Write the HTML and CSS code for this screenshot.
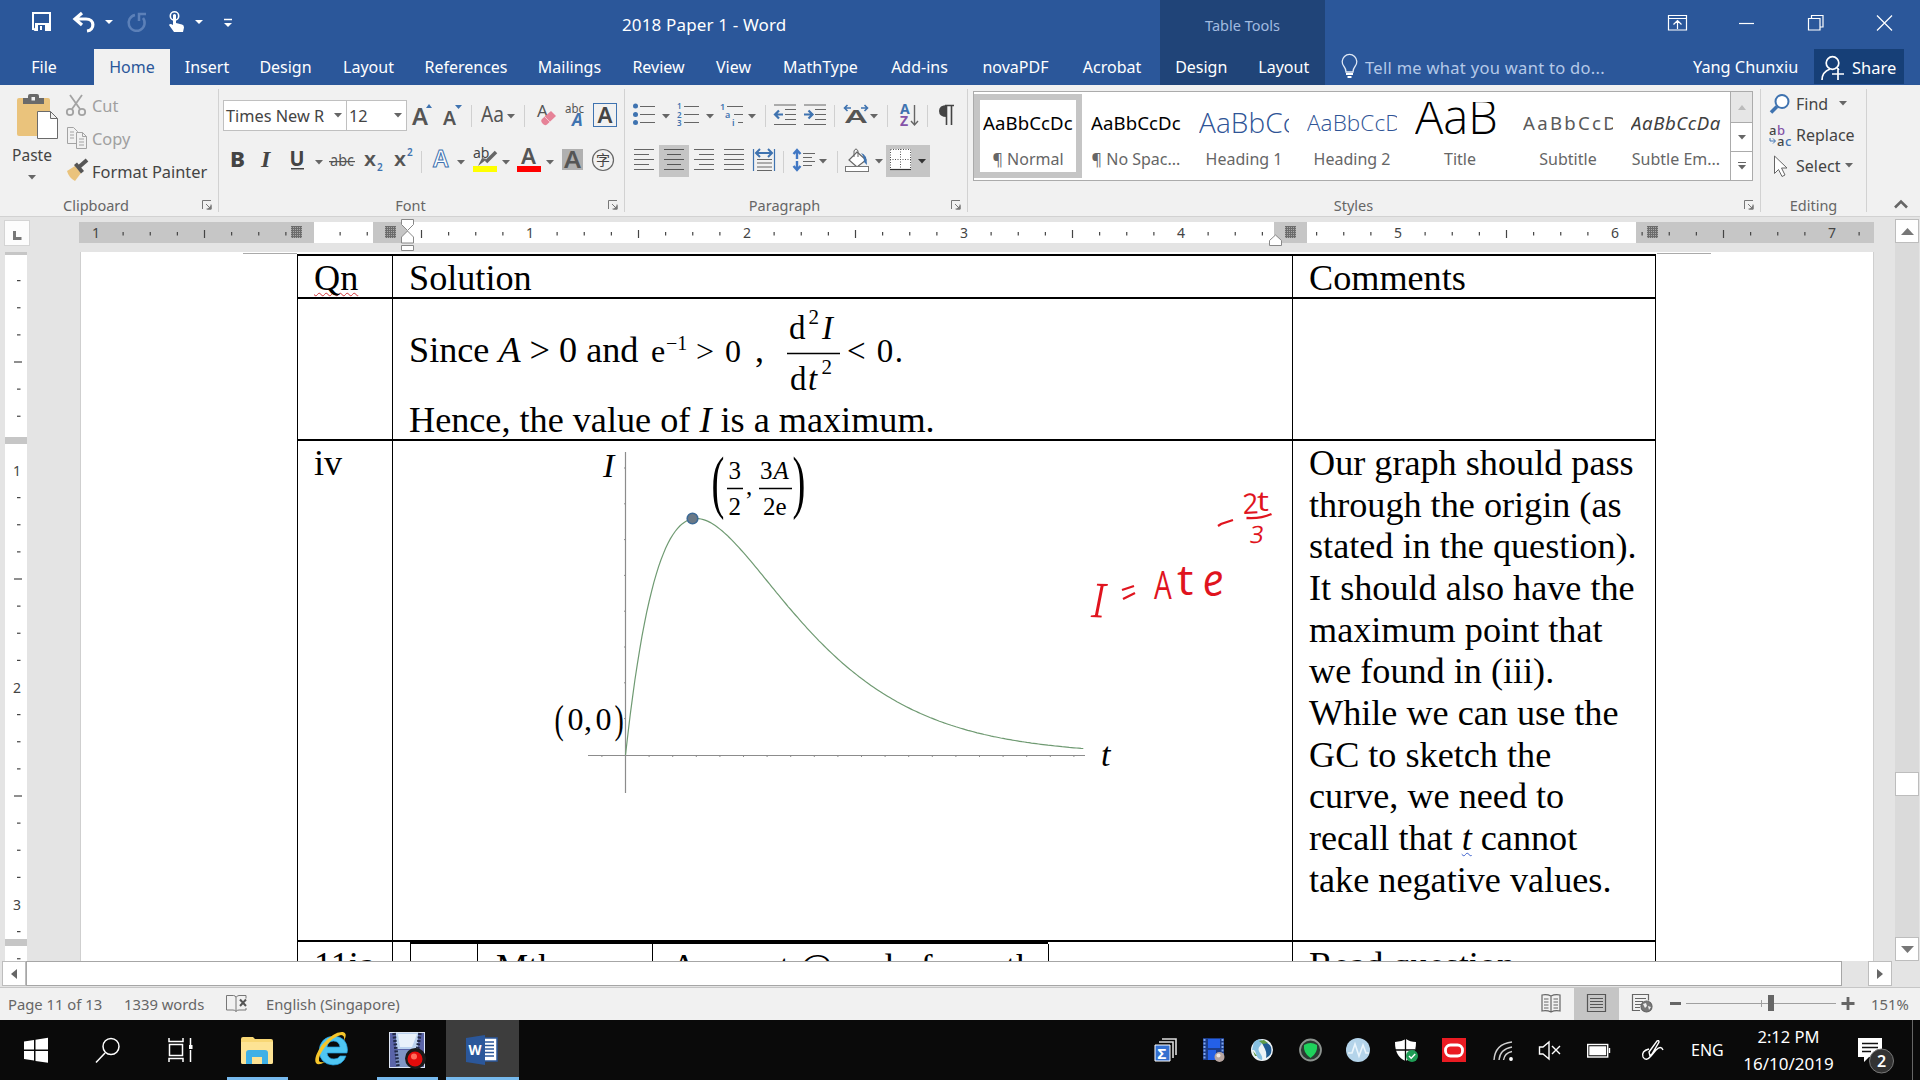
FILE: index.html
```html
<!DOCTYPE html>
<html lang="en">
<head>
  <meta charset="UTF-8">
  <meta name="viewport" content="width=device-width, initial-scale=1.0">
  <title>2018 Paper 1 - Word</title>
  <link rel="stylesheet" href="styles.css">
</head>
<body>
  <!-- Shared symbols -->
  <svg class="defs" width="0" height="0">
    <defs>
      <pattern id="grip" width="2" height="2" patternUnits="userSpaceOnUse"><rect width="2" height="2" fill="#a8a8a8"/><path d="M0 0h1v2h-1zM0 0h2v1h-2z" fill="#6c6c6c"/></pattern>
      <symbol id="launcher" viewBox="0 0 10 10"><path d="M.5 9V.5H9M4 4l4 4M9 4.500V9H4.500" fill="none" stroke="#777"/><path d="M9.500 5v4.500H5z" fill="#777"/></symbol>
      <symbol id="down" viewBox="0 0 8 5"><path d="M0 0h8L4 4.600z" fill="#666"/></symbol>
    </defs>
  </svg>

  <!-- Title bar and tabs -->
  <header class="top">
    <div class="top-main">
      <div class="titlebar">
        <svg class="quick" width="240" height="48" viewBox="0 0 240 48">
          <path d="M33 13h17v17H35l-2-2zM33 13v17" fill="none" stroke="#fff" stroke-width="2"/><path d="M35 23h14v7H35z" fill="#fff"/><path d="M38 25h7v6h-7z" fill="#2b579a"/><path d="M40 26h2v4h-2z" fill="#fff"/>
          <path d="M76 19h10c9 0 9 11 1 12M82 13l-7 6 7 6" fill="none" stroke="#fff" stroke-width="3.200"/>
          <path d="M105 20h8l-4 4zM195 20h8l-4 4zM224 23h8l-4 4z" fill="#fff"/>
          <path d="M135 15a8 8 0 1 0 8 3M146 14h-7v7" fill="none" stroke="#5c80b8" stroke-width="2.500"/>
          <circle cx="174.500" cy="16" r="4.200" fill="none" stroke="#fff" stroke-width="1.600"/><path d="M173 15q1.500-2 3 0v8l6 1.500q2 .5 2 3l-1 4.500h-9l-5-7q1-2 4 0z" fill="#fff"/>
          <path d="M224 19.500h8" stroke="#fff" stroke-width="1.500"/>
        </svg>
        <span class="doc-title">2018 Paper 1 - Word</span>
      </div>
      <nav class="tabs">
        <a class="tab w-file">File</a>
        <a class="tab active w-home">Home</a>
        <a class="tab w-insert">Insert</a>
        <a class="tab w-design">Design</a>
        <a class="tab w-design">Layout</a>
        <a class="tab w-refs">References</a>
        <a class="tab w-mail">Mailings</a>
        <a class="tab w-design">Review</a>
        <a class="tab w-view">View</a>
        <a class="tab w-math">MathType</a>
        <a class="tab w-addins">Add-ins</a>
        <a class="tab w-nova">novaPDF</a>
        <a class="tab w-acro">Acrobat</a>
      </nav>
    </div>
    <div class="top-table">
      <div class="table-tools">Table Tools</div>
      <nav class="tabs">
        <a class="tab w-design">Design</a>
        <a class="tab w-design">Layout</a>
      </nav>
    </div>
    <div class="top-right">
      <svg class="win-buttons" width="595" height="49" viewBox="1325 0 595 49" fill="none" stroke="#fff" stroke-width="1.200">
        <path d="M1668.500 15.500h18v14.500h-18zM1668.500 18.500h18M1677.500 29v-8M1673.500 24.500l4-4 4 4"/>
        <path d="M1739 23.500h15"/>
        <path d="M1808.500 18.500h11.500v11.500h-11.500zM1811.500 18v-2.500h11.500v11.500h-3"/>
        <path d="M1877 15.500l15 15M1892 15.500l-15 15"/>
      </svg>
      <div class="tellrow">
        <svg width="36" height="36" viewBox="1325 49 36 36"><path d="M1346 72q0-3-2-5.500a7.300 7.300 0 1 1 11 0q-2 2.500-2 5.500z" fill="none" stroke="#dfe8f5" stroke-width="1.300"/><path d="M1346 74h7M1347.500 77h4" stroke="#fff" stroke-width="1.800"/></svg>
        <span class="tell">Tell me what you want to do...</span>
        <span class="user">Yang Chunxiu</span>
        <a class="share">
          <svg width="34" height="35" viewBox="1814 49 34 35"><g fill="none" stroke="#fff" stroke-width="1.700"><circle cx="1832.500" cy="63" r="6.300"/><path d="M1822 80q0-8 8-11M1838 68v12M1832 74h12M1837 68l2 2"/></g></svg>
          <span>Share</span>
        </a>
      </div>
    </div>
  </header>

  <!-- Ribbon -->
  <section class="ribbon">
    <div class="group clipboard">
      <div class="body">
        <div class="paste">
          <svg width="62" height="56" viewBox="0 89 62 56"><rect x="16" y="98" width="33" height="38" rx="2" fill="#eac37c"/><path d="M22 104v-6h5v-2q0-2 2-2h7q2 0 2 2v2h5v6z" fill="#6a6a6a"/><rect x="30.500" y="97" width="3.500" height="3.500" fill="#f1f1f1"/><path d="M36.500 111.500h13l7 7v20h-20zM49.500 111.500v7h7" fill="#fff" stroke="#6a6a6a"/></svg>
          <span>Paste</span>
          <svg class="arrow" width="8" height="5"><use href="#down"/></svg>
        </div>
        <div class="clip-list">
          <div class="cmd dim"><svg width="27" height="24" viewBox="64 93 27 24" fill="none" stroke="#a3a3a3" stroke-width="1.800"><path d="M70 95l10 14M82 95l-10 14"/><circle cx="70" cy="112" r="3.200"/><circle cx="82" cy="112" r="3.200"/></svg><span>Cut</span></div>
          <div class="cmd dim"><svg width="27" height="26" viewBox="64 125 27 26" fill="#f1f1f1" stroke="#a3a3a3"><path d="M67.500 127.500h6l4 4v12h-10zM70 132h4M70 135h4M70 138h4"/><path d="M76.500 132.500h6l4 4v12h-10zM82.500 132.500v4h4M79 139h5M79 142h5M79 145h5"/></svg><span>Copy</span></div>
          <div class="cmd"><svg width="27" height="26" viewBox="64 158 27 26"><path d="M67 171l8-5 6 7-6 8q-6-3-8-10z" fill="#eac37c"/><path d="M74 165l3-2.500 7 8.500-3 2.500z" fill="#555"/><path d="M79 167l8-7" stroke="#555" stroke-width="4"/></svg><span>Format Painter</span></div>
        </div>
      </div>
      <div class="label"><i></i><span>Clipboard</span><i></i><svg width="10" height="10"><use href="#launcher"/></svg></div>
    </div>

    <div class="group font">
      <div class="body rows">
        <div class="row">
          <div class="combo name"><span>Times New R</span><svg width="8" height="5"><use href="#down"/></svg></div>
          <div class="combo size"><span>12</span><svg width="8" height="5"><use href="#down"/></svg></div>
          <svg width="64" height="32" viewBox="407 99 64 32" fill="#555"><text class="ic" x="412" y="125" font-size="23" textLength="16" lengthAdjust="spacingAndGlyphs" font-weight="600">A</text><path d="M426 108l3-4 3 4z" fill="#3f73b0"/><text class="ic" x="443" y="125" font-size="19" textLength="13" lengthAdjust="spacingAndGlyphs" font-weight="600">A</text><path d="M455 105h7l-3.500 4z" fill="#3f73b0"/></svg>
          <svg width="53" height="32" viewBox="471 99 53 32"><path d="M471.500 105v22" stroke="#d0d0d0"/><text class="ic" x="481" y="122" font-size="21" fill="#555" textLength="23" lengthAdjust="spacingAndGlyphs">Aa</text><path d="M507 114h8l-4 4.500z" fill="#666"/></svg>
          <svg width="38" height="32" viewBox="524 99 38 32"><path d="M524.500 105v22" stroke="#d0d0d0"/><text class="ic" x="537" y="117" font-size="17" fill="#555">A</text><path d="M542 119l9-8 5 5-9 8.500q-2 1.500-4-.5-3-3-1-5z" fill="#e68297"/><path d="M545 117l5 5" stroke="#f5c5cf"/></svg>
          <svg width="60" height="32" viewBox="562 99 60 32"><text class="ic" x="565" y="113" font-size="13" fill="#555" textLength="19" lengthAdjust="spacingAndGlyphs">abc</text><text class="ic" x="572" y="126" font-size="17" fill="#3f73b0" font-weight="700" font-style="italic">A</text><rect x="593.500" y="103.500" width="23" height="23" fill="none" stroke="#3f73b0"/><text class="ic" x="597.500" y="122.500" font-size="22" font-weight="600" fill="#444" textLength="15" lengthAdjust="spacingAndGlyphs">A</text></svg>
        </div>
        <div class="row">
          <svg width="105" height="32" viewBox="223 145 105 32" fill="#444"><text class="ic" x="230" y="167" font-size="22" font-weight="800" textLength="15" lengthAdjust="spacingAndGlyphs">B</text><text class="se" x="261" y="167" font-size="24" font-weight="700" font-style="italic">I</text><text class="ic" x="289.500" y="166" font-size="21" font-weight="700" textLength="15" lengthAdjust="spacingAndGlyphs">U</text><path d="M291 168h13v1.500h-13z"/><path d="M315 160h8l-4 4.500z" fill="#666"/></svg>
          <svg width="93" height="32" viewBox="328 145 93 32" fill="#555"><text class="ic" x="330" y="166" font-size="17" textLength="24" lengthAdjust="spacingAndGlyphs">abc</text><path d="M329 161h26v1.200h-26z"/><text class="ic" x="364" y="166" font-size="20" font-weight="600" textLength="12" lengthAdjust="spacingAndGlyphs">x</text><text class="ic" x="377" y="171" font-size="10" font-weight="600" fill="#3f73b0">2</text><text class="ic" x="394" y="166" font-size="20" font-weight="600" textLength="12" lengthAdjust="spacingAndGlyphs">x</text><text class="ic" x="407" y="156" font-size="10" font-weight="600" fill="#3f73b0">2</text></svg>
          <svg width="49" height="32" viewBox="421 145 49 32"><path d="M421.500 151v22" stroke="#d0d0d0"/><text class="ic" x="433" y="167" font-size="23" font-weight="600" fill="#fff" stroke="#3f73b0" stroke-width="1">A</text><path d="M457 160h8l-4 4.500z" fill="#666"/></svg>
          <svg width="44" height="32" viewBox="470 145 44 32"><text class="ic" x="473" y="158" font-size="14" fill="#444">ab</text><path d="M496 152l-10 10" stroke="#666" stroke-width="3.500"/><path d="M487 159l-9 7 4-8z" fill="#666"/><rect x="473" y="166" width="24" height="6" fill="#ff0"/><path d="M502 160h8l-4 4.500z" fill="#666"/></svg>
          <svg width="44" height="32" viewBox="514 145 44 32"><text class="ic" x="521" y="164" font-size="21" font-weight="600" fill="#555" textLength="15" lengthAdjust="spacingAndGlyphs">A</text><rect x="517" y="166" width="24" height="6" fill="#f00"/><path d="M546 160h8l-4 4.500z" fill="#666"/></svg>
          <svg width="64" height="32" viewBox="558 145 64 32"><rect x="562" y="149" width="21" height="21" fill="#b0b0b0"/><text class="ic" x="564" y="168" font-size="23" font-weight="600" fill="#555" textLength="17" lengthAdjust="spacingAndGlyphs">A</text><circle cx="603" cy="160" r="10.500" fill="none" stroke="#666" stroke-width="1.200"/><text class="cjk" x="596" y="165" font-size="14" fill="#444">字</text></svg>
        </div>
      </div>
      <div class="label"><i></i><span>Font</span><i></i><svg width="10" height="10"><use href="#launcher"/></svg></div>
    </div>

    <div class="group paragraph">
      <div class="body rows">
        <div class="row">
          <svg width="47" height="32" viewBox="628 99 47 32"><g fill="#3f73b0"><circle cx="635.500" cy="106" r="2.500"/><circle cx="635.500" cy="114.500" r="2.500"/><circle cx="635.500" cy="122.500" r="2.500"/></g><path d="M640 106.500h15M640 114.500h15M640 122.500h15" stroke="#666" stroke-width="1.200"/><path d="M662 114h8l-4 4.500z" fill="#666"/></svg>
          <svg width="44" height="32" viewBox="675 99 44 32"><g class="ic" fill="#3f73b0" font-size="8" font-weight="600"><text x="677" y="109">1</text><text x="677" y="117.500">2</text><text x="677" y="126">3</text></g><path d="M684 106.500h15M684 114.500h15M684 122.500h15" stroke="#666" stroke-width="1.200"/><path d="M706 114h8l-4 4.500z" fill="#666"/></svg>
          <svg width="46" height="32" viewBox="719 99 46 32"><g class="ic" fill="#3f73b0" font-size="9" font-weight="600"><text x="720" y="110">1</text><text x="725" y="118">a</text><text x="732" y="126">i</text></g><path d="M727 106.500h16M734 114.500h9M738 122.500h5" stroke="#666" stroke-width="1.200"/><path d="M748 114h8l-4 4.500z" fill="#666"/></svg>
          <svg width="69" height="32" viewBox="765 99 69 32"><path d="M765.500 105v22" stroke="#d0d0d0"/><path d="M774 105h22M785 109.500h11M785 114.500h11M785 119.500h11M774 124.500h22M804 105h22M815 109.500h11M815 114.500h11M815 119.500h11M804 124.500h22" stroke="#666" stroke-width="1.200"/><path d="M783 114.500h-8M779 110.500l-4 4 4 4M804 114.500h8M808.500 110.500l4 4-4 4" fill="none" stroke="#3f73b0" stroke-width="2.200"/></svg>
          <svg width="53" height="32" viewBox="834 99 53 32"><path d="M834.500 105v22" stroke="#d0d0d0"/><text class="ic" x="845" y="123" font-size="18" font-weight="600" fill="#555" textLength="22" lengthAdjust="spacingAndGlyphs">A</text><path d="M845 108h6M847.500 105l-3 3 3 3M867 108h-6M864.500 105l3 3-3 3" fill="none" stroke="#3f73b0" stroke-width="1.600"/><path d="M870 114h8l-4 4.500z" fill="#666"/></svg>
          <svg width="40" height="32" viewBox="887 99 40 32"><path d="M887.500 105v22" stroke="#d0d0d0"/><g class="ic" font-size="14" font-weight="700"><text x="900" y="114" fill="#3f73b0">A</text><text x="900" y="126" fill="#8453a8">Z</text></g><path d="M914.500 105v20M911 121l3.500 4 3.500-4" fill="none" stroke="#666" stroke-width="1.400"/></svg>
          <svg width="38" height="32" viewBox="927 99 38 32"><path d="M927.500 105v22" stroke="#d0d0d0"/><path d="M947 105v12q-8 0-8-6t8-6z" fill="#444"/><path d="M945 105.500h9M946.500 105v20M951.500 105v20" stroke="#444" stroke-width="1.600"/></svg>
        </div>
        <div class="row">
          <svg width="31" height="32" viewBox="628 145 31 32"><path d="M634 149.500h20M634 154.500h15M634 159.500h20M634 164.500h15M634 169.500h20" stroke="#666" stroke-width="1.200"/></svg>
          <svg class="on" width="30" height="32" viewBox="659 145 30 32"><path d="M664 149.500h20M667 154.500h14M664 159.500h20M667 164.500h14M664 169.500h20" stroke="#555" stroke-width="1.200"/></svg>
          <svg width="61" height="32" viewBox="689 145 61 32"><path d="M694 149.500h20M699 154.500h15M694 159.500h20M699 164.500h15M694 169.500h20M724 149.500h20M724 154.500h20M724 159.500h20M724 164.500h20M724 169.500h20" stroke="#666" stroke-width="1.200"/></svg>
          <svg width="33" height="32" viewBox="750 145 33 32"><path d="M757 159.500h15M757 163h15M757 167h15M757 170.500h15" stroke="#666" stroke-width="1.200"/><path d="M753.500 149v22M774.500 149v22" stroke="#3f73b0" stroke-width="1.200"/><path d="M756.500 153h15M760 149l-4 4 4 4M768 149l4 4-4 4" fill="none" stroke="#3f73b0" stroke-width="2"/></svg>
          <svg width="54" height="32" viewBox="783 145 54 32"><path d="M783.500 151v22" stroke="#d0d0d0"/><path d="M797 150v20M793.500 154l3.500-4 3.500 4M793.500 166l3.500 4 3.500-4" fill="none" stroke="#4178c4" stroke-width="2.400"/><path d="M795 160h4" stroke="#f1f1f1" stroke-width="2"/><path d="M803 153.500h12M803 157.500h9M803 161.500h12M803 165.500h9" stroke="#666" stroke-width="1.200"/><path d="M819 159h8l-4 4.500z" fill="#666"/></svg>
          <svg width="49" height="32" viewBox="837 145 49 32"><path d="M837.500 151v22" stroke="#d0d0d0"/><path d="M857 152l9 8-9 7-8-7z" fill="#fff" stroke="#666" stroke-width="1.200"/><path d="M854 157v-6q2-4 4 0v6" fill="none" stroke="#666"/><path d="M861 153q6 1 6 12l-3-3q0-6-3-9z" fill="#3f73b0"/><rect x="845.500" y="166.500" width="23" height="5" fill="#fff" stroke="#777"/><path d="M875 159h8l-4 4.500z" fill="#666"/></svg>
          <svg class="on" width="44" height="32" viewBox="886 145 44 32"><rect x="890" y="149" width="21" height="21" fill="#fff"/><path d="M890.500 149.500h20v20M890.500 149.500v20M900.500 149v21M890 159.500h21" fill="none" stroke="#555" stroke-dasharray="1 1.500"/><path d="M890 169.500h21" stroke="#333" stroke-width="1.200"/><path d="M918 159h8l-4 4.500z" fill="#333"/></svg>
        </div>
      </div>
      <div class="label"><i></i><span>Paragraph</span><i></i><svg width="10" height="10"><use href="#launcher"/></svg></div>
    </div>

    <div class="group styles">
      <div class="body">
        <div class="gallery">
          <div class="style selected"><div class="preview">AaBbCcDc</div><div class="name">¶ Normal</div></div>
          <div class="style"><div class="preview">AaBbCcDc</div><div class="name">¶ No Spac...</div></div>
          <div class="style"><div class="preview h1">AaBbCc</div><div class="name">Heading 1</div></div>
          <div class="style"><div class="preview h2">AaBbCcD</div><div class="name">Heading 2</div></div>
          <div class="style"><div class="preview title">AaB</div><div class="name">Title</div></div>
          <div class="style"><div class="preview sub">AaBbCcD</div><div class="name">Subtitle</div></div>
          <div class="style"><div class="preview em">AaBbCcDa</div><div class="name">Subtle Em...</div></div>
          <div class="gallery-scroll">
            <span class="off"><svg width="8" height="5" viewBox="0 0 8 5"><path d="M0 5h8L4 0z" fill="#bbb"/></svg></span>
            <span><svg width="8" height="5"><use href="#down"/></svg></span>
            <span><svg width="8" height="8" viewBox="0 0 8 8"><path d="M0 .5h8" stroke="#666"/><path d="M0 3h8L4 7.600z" fill="#666"/></svg></span>
          </div>
        </div>
      </div>
      <div class="label"><i></i><span>Styles</span><i></i><svg width="10" height="10"><use href="#launcher"/></svg></div>
    </div>

    <div class="group editing">
      <div class="body">
        <div class="cmd"><svg width="30" height="24" viewBox="1766 91 30 24" fill="none" stroke="#3f73b0"><circle cx="1782" cy="100.500" r="6.500" stroke-width="2" fill="#fff"/><path d="M1777 105.500l-6 6" stroke-width="3.500"/></svg><span>Find</span><svg class="gap-l" width="8" height="5"><use href="#down"/></svg></div>
        <div class="cmd"><svg width="30" height="26" viewBox="1766 121 30 26"><g class="ic" font-size="13" font-weight="500"><text x="1769" y="134" fill="#444">a</text><text x="1777" y="134" fill="#8453a8">b</text><text x="1777" y="145" fill="#444">a</text><text x="1785" y="145" fill="#3f73b0">c</text></g><path d="M1770 137v3h5M1773 137.500l2.500 2.500-2.500 2.500" fill="none" stroke="#3f73b0"/></svg><span>Replace</span></div>
        <div class="cmd"><svg width="30" height="26" viewBox="1766 152 30 26"><path d="M1774.500 155l12.500 12h-5.500l3.500 7-3 1.500-3.500-7-4 4z" fill="#fff" stroke="#666"/></svg><span>Select</span><svg class="gap-s" width="8" height="5"><use href="#down"/></svg></div>
      </div>
      <div class="label single"><span>Editing</span></div>
    </div>
    <svg class="collapse" width="16" height="10" viewBox="0 0 16 10"><path d="M2 8.500l6-6 6 6" fill="none" stroke="#666" stroke-width="2.600"/></svg>
  </section>

  <!-- Rulers and document -->
  <main class="workspace">
    <div class="view">
      <svg class="hruler" width="1895" height="34" viewBox="0 217 1895 34">
        <rect x="4.500" y="220.500" width="25" height="25" fill="#fcfcfc" stroke="#d4d4d4"/>
        <path d="M14.500 231v7.500H21.500" fill="none" stroke="#777" stroke-width="3"/>
        <rect x="79" y="222" width="1795" height="21" fill="#c6c6c6"/>
        <path d="M314 222h59v21h-59zM407 222h867v21h-867zM1307 222h329v21h-329z" fill="#fff"/>
        <g id="hticks"></g>
        <path d="M291 226h11v12h-11zM385 226h11v12h-11zM1285 226h11v12h-11zM1647 226h11v12h-11z" fill="url(#grip)"/>
        <path d="M401.500 219.500h12v5l-6 6-6-6zM407.500 231l6 6v6h-12v-6zM401.500 245.500h12v5h-12zM1275.500 235l6 5.500v5h-12v-5z" fill="#fff" stroke="#888"/>
      </svg>
      <div class="doc-row">
        <svg class="vruler" width="80" height="710" viewBox="0 251 80 710">
          <rect x="5" y="252" width="22" height="709" fill="#fff"/>
          <path d="M5 252h22v3h-22zM5 437h22v7h-22zM5 939h22v7h-22z" fill="#c6c6c6"/>
          <g id="vticks"></g>
        </svg>
        <div class="page">
          <div class="crop-marks"><i></i><i></i></div>
          <div class="table">
            <div class="tr head">
              <div class="td"><span class="misspelt">Qn</span></div>
              <div class="td">Solution</div>
              <div class="td">Comments</div>
            </div>
            <div class="tr proof">
              <div class="td"></div>
              <div class="td">
                <div class="formula">
                  <span>Since <em>A</em> &gt; 0 and</span>
                  <svg width="270" height="99" viewBox="645 299 270 99">
                    <text x="651" y="362" font-size="32">e</text><text x="666" y="350" font-size="20">−1</text><text x="696" y="362" font-size="32" textLength="45">&gt; 0</text>
                    <text x="755" y="362" font-size="36">,</text>
                    <text x="789" y="339" font-size="33">d</text><text x="808.500" y="324" font-size="21">2</text><text x="822" y="339" font-size="33" font-style="italic">I</text>
                    <path d="M787 353.500h53" stroke="#000" stroke-width="1.500"/>
                    <text x="790" y="390" font-size="33">d</text><text x="808" y="390" font-size="33" font-style="italic">t</text><text x="821.500" y="374" font-size="21">2</text>
                    <text x="847" y="362" font-size="33" textLength="56">&lt; 0.</text>
                  </svg>
                </div>
                <div>Hence, the value of <em>I</em> is a maximum.</div>
              </div>
              <div class="td"></div>
            </div>
            <div class="tr sketch">
              <div class="td">iv</div>
              <div class="td graph-cell">
                <svg class="graph" width="899" height="499" viewBox="393 441 899 499">
                  <path d="M588 755.500h497M625.500 452v341" stroke="#8c8c8c" stroke-width="1.200"/>
                  <g id="axis-ticks" stroke="#8c8c8c"></g>
                  <path id="curve" fill="none" stroke="#6f9a72" stroke-width="1.200"/>
                  <circle cx="692.500" cy="518.500" r="5.300" fill="#6b7986" stroke="#3d6a96" stroke-width="1.600"/>
                  <text x="603" y="477" font-size="34" font-style="italic">I</text>
                  <text x="1101" y="766" font-size="34" font-style="italic">t</text>
                  <text transform="translate(554.500 732.500) scale(.68 1)" font-size="41">(</text>
                  <text x="567.500" y="730" font-size="32">0</text><text x="584" y="730" font-size="32">,</text><text x="595.500" y="730" font-size="32">0</text>
                  <text transform="translate(614.500 732.500) scale(.68 1)" font-size="41">)</text>
                  <text transform="translate(711.500 505) scale(.56 1)" font-size="69">(</text>
                  <text transform="translate(792.500 505) scale(.56 1)" font-size="69">)</text>
                  <g font-size="25">
                    <text x="728.500" y="478.500">3</text><text x="728.500" y="515">2</text><text x="746" y="495">,</text>
                    <text x="760" y="478.500">3</text><text x="773.500" y="478.500" font-style="italic">A</text><text x="763" y="515">2e</text>
                  </g>
                  <path d="M727 488.500h16M759 488.500h33" stroke="#000" stroke-width="1.300"/>
                  <!-- pen annotation -->
                  <g class="ink">
                    <text class="slab" transform="translate(1088 617) rotate(2) skewX(-9) scale(1.100 1)" font-size="47">I</text>
                    <text transform="translate(1154 599) scale(.72 1)" font-size="39">A</text>
                    <text transform="translate(1177 595) scale(1.100 1)" font-size="42">t</text>
                    <text transform="translate(1204 597) rotate(-8)" font-size="44" font-style="italic">e</text>
                    <text transform="translate(1243 514) rotate(-3)" font-size="28">2</text>
                    <text transform="translate(1257 511) scale(1.200 1)" font-size="28">t</text>
                    <text transform="translate(1249 543) skewX(-8)" font-size="24">3</text>
                    <path d="M1122 590l12-4M1123 599l12-6M1218 526l3-2 12-4M1246.500 518q14 1 25-4"/>
                  </g>
                </svg>
              </div>
              <div class="td">Our graph should pass<br>through the origin (as<br>stated in the question).<br>It should also have the<br>maximum point that<br>we found in (iii).<br>While we can use the<br>GC to sketch the<br>curve, we need to<br>recall that <em class="grammar">t</em> cannot<br>take negative values.</div>
            </div>
            <div class="tr next">
              <div class="td">11ia</div>
              <div class="td nest">
                <div class="inner"><span></span><span>Mth</span><span>Amount @ end of month</span></div>
              </div>
              <div class="td">Read question</div>
            </div>
          </div>
        </div>
      </div>
    </div>
    <div class="vscroll">
      <span class="sb"><svg width="13" height="7" viewBox="0 0 13 7"><path d="M0 7h13L6.500 0z" fill="#777"/></svg></span>
      <span class="sb thumb"></span>
      <span class="sb"><svg width="13" height="7" viewBox="0 0 13 7"><path d="M0 0h13L6.500 7z" fill="#777"/></svg></span>
    </div>
  </main>

  <div class="hscroll">
    <span class="hb"><svg width="6" height="10" viewBox="0 0 6 10"><path d="M6 0v10L0 5z" fill="#666"/></svg></span>
    <span class="hthumb"></span>
    <span class="hb right"><svg width="6" height="10" viewBox="0 0 6 10"><path d="M0 0v10L6 5z" fill="#666"/></svg></span>
  </div>

  <!-- Status bar -->
  <footer class="status">
    <span class="s-page">Page 11 of 13</span>
    <span class="s-words">1339 words</span>
    <svg width="40" height="32" viewBox="226 988 40 32" fill="none" stroke="#777"><path d="M226.500 995.500h7q2 0 2.500 2v14q-1-1.500-3-1.500h-6.500zM236 997.500q1-2 3-2h7v3M236 1011.500q1-1.500 3-1.500h7v-2"/><path d="M240 999.500l6 6.500M246 999.500l-6 6.500" stroke="#555" stroke-width="2"/></svg>
    <span class="s-lang">English (Singapore)</span>
    <svg width="38" height="32" viewBox="1536 988 38 32" fill="none" stroke="#666" stroke-width="1.200"><path d="M1551 996q-4-2-9-1v16q5-1 9 1 4-2 9-1v-16q-5-1-9 1zM1551 996v16M1544 999h4.500M1544 1002h4.500M1544 1005h4.500M1544 1008h4.500M1553.500 999h4.500M1553.500 1002h4.500M1553.500 1005h4.500M1553.500 1008h4.500"/></svg>
    <svg class="on" width="45" height="32" viewBox="1574 988 45 32" fill="none" stroke="#555" stroke-width="1.200"><path d="M1587.500 994.500h18v17h-18zM1590 998.500h13M1590 1001.500h13M1590 1004.500h13M1590 1007.500h13"/></svg>
    <svg width="46" height="32" viewBox="1619 988 46 32" fill="none" stroke="#666" stroke-width="1.200"><path d="M1640 1010.500h-7.500v-16h16v6M1635 998.500h11M1635 1001.500h8M1635 1004.500h6M1635 1007.500h5"/><circle cx="1646.500" cy="1006.500" r="5.500" fill="#777"/><path d="M1643 1004l3-1 1 3-2 2zM1648 1006l3 1-2 3z" fill="#eee" stroke="none"/></svg>
    <svg width="200" height="32" viewBox="1665 988 200 32"><path d="M1670 1003.500h11M1841.500 1003.500h13M1848 997v13" stroke="#666" stroke-width="2.800"/><path d="M1686 1003.500h150M1761.500 1000v7" stroke="#a0a0a0"/><rect x="1768" y="995" width="6" height="16" fill="#666"/></svg>
    <span class="s-zoom">151%</span>
  </footer>

  <!-- Taskbar -->
  <div class="taskbar">
    <svg width="227" height="60" viewBox="0 1020 227 60">
      <path d="M24 1041.500l10-1.500v9.500H24zM35.500 1039.700l12.500-1.900v11.700H35.500zM24 1051h10v9.500l-10-1.500zM35.500 1051h12.500v11.800l-12.500-1.900z" fill="#fff"/>
      <g fill="none" stroke="#fff" stroke-width="1.500"><circle cx="111" cy="1046.500" r="8"/><path d="M105 1053l-9 9.500"/>
      <path d="M169 1038v3.500h14V1038M169.500 1044.500h13v11h-13zM169 1062v-3.500h14v3.500M190.500 1038v7M190.500 1050v12"/></g><rect x="189" y="1045" width="3.500" height="4" fill="#fff"/>
    </svg>
    <a class="task open"><svg width="61" height="60" viewBox="227 1020 61 60"><path d="M241 1039q0-2 2-2h10l2 2h16q2 0 2 2v21q0 2-2 2h-28q-2 0-2-2z" fill="#f8d775"/><path d="M241 1042h32v20q0 2-2 2h-28q-2 0-2-2z" fill="#fde394"/><path d="M246 1064v-11q0-3 3-3h16q3 0 3 3v11h-6v-7h-10v7z" fill="#3fb0e6"/></svg></a>
    <svg width="89" height="60" viewBox="288 1020 89 60"><path d="M347 1053h-20q1 6 7 6 4 0 6-3l6 0q-3 9-13 9-13-1-14-14 1-14 15-15 13 1 13.500 14zM327 1047h13q-1-6-6.500-6t-6.500 6z" fill="#4fc6f2" stroke="#1f9bdc" stroke-width=".7"/><path d="M344 1041q4-8-1-9-9-1-21 13-9 13-6 18 2 3 9-1-5 1-6-1-1-5 6-14 9-11 16-12 4 0 3 6z" fill="#f6c62b"/></svg>
    <a class="task open"><svg width="61" height="60" viewBox="377 1020 61 60"><rect x="389" y="1032" width="36" height="36" fill="#dfe7f5"/><rect x="390" y="1033" width="34" height="34" fill="#5a64a8"/><path d="M396 1033h22v16h-22z" fill="#bcd3f0"/><path d="M398 1034h19l-5 13h-12z" fill="#e8f1fb"/><path d="M396 1050h15v17h-15z" fill="#7f95c4"/><path d="M394 1033l4 34M420 1033l-3 20" stroke="#222a48" stroke-width="3.500" stroke-dasharray="2 1.500"/><circle cx="415.500" cy="1058.500" r="10.500" fill="#1b1b1b"/><circle cx="415" cy="1059" r="7.500" fill="#e30b0b"/><circle cx="414" cy="1056.500" r="3" fill="#ff6d5c"/></svg></a>
    <a class="task open current"><svg width="73" height="60" viewBox="446 1020 73 60"><rect x="483" y="1038" width="14" height="23" fill="#fff" stroke="#2b579a" stroke-width="1.500"/><path d="M485 1042h9M485 1045.500h9M485 1049h9M485 1052.500h9M485 1056h9" stroke="#2b579a" stroke-width="1.500"/><path d="M466 1038l19-3v30l-19-3z" fill="#2b579a"/><text class="ic" x="468.500" y="1055" font-size="14" font-weight="700" fill="#fff" textLength="13" lengthAdjust="spacingAndGlyphs">W</text></svg></a>
    <svg class="tray" width="340" height="60" viewBox="1140 1020 340 60">
      <path d="M1162 1039h14v16M1159 1042h14v16" fill="none" stroke="#ddd" stroke-width="1.600"/><path d="M1155 1045h15v16h-15z" fill="#3470d0" stroke="#fff"/><text class="ic" x="1157.500" y="1058.500" font-size="15" font-weight="700" fill="#fff">Σ</text>
      <rect x="1203" y="1038" width="21" height="22" fill="#1c3d8a"/><path d="M1204.500 1039v20M1222.500 1039v20" stroke="#7fa6ee" stroke-width="2" stroke-dasharray="2 1.500"/><path d="M1208 1039h12v9h-12zM1208 1050h8v10h-8z" fill="#2460e8"/><circle cx="1219.500" cy="1057" r="5" fill="#b9a6a0"/><circle cx="1218.500" cy="1055.500" r="2" fill="#efe6e2"/>
      <circle cx="1262" cy="1050" r="11" fill="#eef3f6"/><path d="M1254 1042q5-4 8-2 1 3-2 6t0 7q3 4 2 7-5-1-6-6t-4-4z" fill="#86bfe0"/><path d="M1262 1043q6-2 9 4 2 8-5 11 1-5-1-9t-3-6z" fill="#215d94"/><path d="M1259 1041l5-1 4 3-5 1zM1253 1051l4 5-2 0z" fill="#5f9c46"/>
      <circle cx="1310.500" cy="1050" r="10.500" fill="#2b3a33" stroke="#8d9490" stroke-width="1.800"/><path d="M1304 1045q6.500-4 13 0 1 8-6.500 13-7.500-5-6.500-13z" fill="#1fd15c"/>
      <circle cx="1358" cy="1050" r="12" fill="#b4d4ea"/><path d="M1348 1053h4l3-9 4 12 4-11 3 8h3" fill="none" stroke="#eaf5fc" stroke-width="1.600"/>
      <path d="M1395 1042q6 0 11-3 4 3 10 3 0 15-10.500 19-10.500-4-10.500-19z" fill="#fff"/><path d="M1405.500 1039v22M1395 1050h20" stroke="#0a0a0a" stroke-width="1.300"/><circle cx="1412" cy="1056" r="6" fill="#1f9d55"/><path d="M1409 1056l2.200 2.300 4-4.300" fill="none" stroke="#fff" stroke-width="1.400"/>
      <rect x="1442" y="1038" width="24" height="24" fill="#ea1b22"/><rect x="1445.500" y="1045" width="17" height="11" rx="5" fill="none" stroke="#fff" stroke-width="2.800"/>
    </svg>
    <svg width="205" height="60" viewBox="1480 1020 205 60" fill="none" stroke="#fff" stroke-width="1.400">
      <path d="M1494 1060q1-16 18-18M1499 1060q1-11 13-13M1503.500 1060q1-7 8.500-8.500" stroke="#cfcfcf"/><circle cx="1511" cy="1059" r="1.200" fill="#fff"/>
      <path d="M1539.500 1047h3.500l6-5v17l-6-5h-3.500zM1552 1046l8 8M1560 1046l-8 8"/>
      <rect x="1587.700" y="1044.500" width="20" height="12.500"/><path d="M1590 1047h15.500v7.500h-15.500z" fill="#fff"/><path d="M1609.500 1048v5"/>
      <path d="M1650 1056l-1-4 8-11q2-1 2 1l-7 12zM1649 1049q-8 2-6 8 3 5 8-1l5-6q5-5 7 0"/>
    </svg>
    <span class="lang">ENG</span>
    <div class="clock"><span>2:12 PM</span><span class="date">16/10/2019</span></div>
    <svg width="60" height="60" viewBox="1850 1020 60 60"><path d="M1858 1038h24v19h-13l-5 5v-5h-6z" fill="#fff"/><path d="M1862 1043.500h16M1862 1047.500h16M1862 1051.500h9" stroke="#111" stroke-width="1.300"/><circle cx="1881.500" cy="1061" r="12" fill="#333" stroke="#777"/><text class="ic" x="1877" y="1067" font-size="16" font-weight="600" fill="#fff">2</text></svg>
    <i class="desk"></i>
  </div>

  <script>
    const NS = "http://www.w3.org/2000/svg";
    const eighth = 217 / 8;

    function add(parent, tag, attrs, text) {
      const el = document.createElementNS(NS, tag);
      for (const key in attrs) el.setAttribute(key, attrs[key]);
      if (text) el.textContent = text;
      parent.appendChild(el);
    }

    // horizontal ruler, zero at x = 313
    const h = document.getElementById("hticks");
    for (let i = -8; i <= 57; i++) {
      const x = 313 + i * eighth;
      if (i === 0 || i === 3) continue;
      if (i % 8 === 0) add(h, "text", { x: x, y: 238, class: "num" }, String(Math.abs(i / 8)));
      else if (i % 4 === 0) add(h, "path", { d: `M${x} 230v8`, class: "tick" });
      else add(h, "path", { d: `M${x} 232v3.500`, class: "tick" });
    }

    // vertical ruler, zero at y = 253.5
    const v = document.getElementById("vticks");
    for (let i = 1; i <= 26; i++) {
      const y = 253.5 + i * eighth;
      if (i === 7) continue;
      if (i % 8 === 0) add(v, "text", { x: 17, y: y + 5, class: "num" }, String(i / 8));
      else if (i % 4 === 0) add(v, "path", { d: `M14 ${y}h8`, class: "tick" });
      else add(v, "path", { d: `M17 ${y}h3.500`, class: "tick" });
    }

    // I = A t e^(-2t/3), 47.2px per unit of t
    const ticks = document.getElementById("axis-ticks");
    for (let x = 601.9; x < 1084; x += 23.6) add(ticks, "path", { d: `M${x} 755v2` });
    for (let y = 468; y < 750; y += 35.8) add(ticks, "path", { d: `M624 ${y}h2` });
    let d = "M625.5 755";
    for (let t = 0.05; t < 9.75; t += 0.05) {
      const y = 755 - 236.5 * t * Math.exp(-2 * t / 3) * Math.E / 1.5;
      d += `L${(625.5 + t * 47.2).toFixed(1)} ${y.toFixed(1)}`;
    }
    document.getElementById("curve").setAttribute("d", d);
  </script>
</body>
</html>
```
FILE: styles.css
```css
* {
  box-sizing: border-box;
  margin: 0;
  padding: 0;
}

body {
  width: 1920px;
  height: 1080px;
  overflow: hidden;
  font-family: "Noto Sans", "Open Sans", sans-serif;
  font-size: 16px;
  color: #444;
  background: #e4e4e4;
}

svg {
  display: block;
  flex: none;
}

.defs {
  position: absolute;
}

.ic {
  font-family: "Noto Sans", sans-serif;
}

.se {
  font-family: "Liberation Serif", serif;
}

.cjk {
  font-family: "Noto Sans CJK SC", sans-serif;
}

/* title bar */
.top {
  display: flex;
  height: 85px;
  background: #2b579a;
  color: #fff;
}

.top-main {
  width: 1160px;
}

.titlebar {
  display: flex;
  height: 49px;
}

.doc-title {
  margin-left: 382px;
  line-height: 50px;
  font-size: 17px;
  letter-spacing: .15px;
  white-space: nowrap;
}

.tabs {
  display: flex;
  height: 36px;
}

.tab {
  line-height: 37px;
  text-align: center;
  white-space: nowrap;
}

.tab.active {
  background: #f1f1f1;
  color: #2b579a;
}

.w-file { width: 88px; margin-right: 6px; }
.w-home { width: 76px; }
.w-insert { width: 74px; }
.w-design { width: 83px; }
.w-refs { width: 112px; }
.w-mail { width: 95px; }
.w-view { width: 67px; }
.w-math { width: 107px; }
.w-addins { width: 91px; }
.w-nova { width: 101px; }
.w-acro { width: 92px; }

.top-table {
  width: 165px;
  background: #204478;
}

.table-tools {
  height: 49px;
  line-height: 51px;
  text-align: center;
  font-size: 14.500px;
  color: #a2bbe0;
}

.tellrow {
  display: flex;
  height: 36px;
  line-height: 37px;
}

.tell {
  width: 332px;
  padding-left: 4px;
  font-size: 16.500px;
  letter-spacing: .3px;
  color: #b5c9e8;
}

.user {
  width: 121px;
  font-size: 16.300px;
  white-space: nowrap;
}

.share {
  display: flex;
  width: 90px;
  height: 35px;
  background: #163f77;
}

.share span {
  padding-left: 4px;
  font-size: 16.500px;
}

/* ribbon */
.ribbon {
  display: flex;
  height: 132px;
  background: #f1f1f1;
  border-bottom: 1px solid #d2d2d2;
}

.group {
  display: flex;
  flex-direction: column;
  height: 123px;
  margin: 4px 0;
  border-right: 1px solid #d2d2d2;
}

.clipboard { width: 219px; }
.font { width: 406px; padding-left: 4px; }
.paragraph { width: 343px; padding-left: 3px; }
.styles { width: 793px; padding-left: 5px; }
.editing { width: 106px; padding-left: 5px; }

.body {
  display: flex;
  flex: none;
  height: 105px;
}

.rows {
  flex-direction: column;
  gap: 14px;
  padding-top: 10px;
}

.row {
  display: flex;
  height: 32px;
}

.on {
  background: #c5c5c5;
}

.label {
  display: grid;
  flex: none;
  grid-template-columns: 1fr auto 1fr 26px;
  align-items: center;
  height: 22px;
  font-size: 14.500px;
  line-height: 22px;
  color: #666;
}

.label svg {
  margin-left: 10px;
}

.label.single {
  display: block;
  text-align: center;
  padding-right: 5px;
}

.paste {
  display: flex;
  flex-direction: column;
  align-items: center;
  width: 64px;
  line-height: 20px;
  font-size: 15.500px;
}

.paste .arrow {
  margin-top: 10px;
}

.clip-list {
  padding-top: 3px;
}

.cmd {
  display: flex;
  align-items: center;
  height: 33px;
  white-space: nowrap;
}

.clip-list .cmd {
  font-size: 16.400px;
}

.clip-list .cmd:first-child {
  height: 26px;
  margin-bottom: 3px;
}

.clip-list span {
  padding: 1px 0 0 1px;
}

.dim {
  color: #a0a0a0;
}

.combo {
  display: flex;
  align-items: center;
  justify-content: space-between;
  height: 31px;
  margin-top: 1px;
  padding: 0 4px 0 2px;
  background: #fff;
  border: 1px solid #c0c0c0;
  font-size: 16.300px;
}

.combo.name { width: 124px; }
.combo.size { width: 60px; border-left: 0; }

.gallery {
  display: flex;
  width: 780px;
  height: 90px;
  margin-top: 2px;
  background: #fff;
  border: 1px solid #ababab;
}

.style {
  width: 108px;
  height: 84px;
  margin-top: 2px;
  padding-top: 8px;
  text-align: center;
  color: #666;
}

.style.selected {
  box-shadow: inset 0 0 0 6px #c5c5c5;
}

.preview {
  width: 90px;
  height: 45px;
  margin: 0 auto;
  overflow: hidden;
  text-align: left;
  white-space: nowrap;
  font-size: 18.600px;
  line-height: 41px;
  letter-spacing: .1px;
  color: #000;
}

.preview.h1 {
  font-family: "Open Sans", sans-serif;
  font-weight: 300;
  font-size: 28px;
  line-height: 40px;
  color: #2f5496;
}

.preview.h2 {
  font-family: "Open Sans", sans-serif;
  font-weight: 300;
  font-size: 22.500px;
  color: #2f5496;
}

.preview.title {
  font-family: "Open Sans", sans-serif;
  font-weight: 300;
  font-size: 47px;
  line-height: 28px;
}

.preview.sub {
  letter-spacing: 2.300px;
  color: #5a5a5a;
}

.preview.em {
  font-style: italic;
  letter-spacing: .6px;
  color: #404040;
}

.style .name {
  line-height: 24px;
  white-space: nowrap;
}

.gallery-scroll {
  display: flex;
  flex-direction: column;
  width: 22px;
  margin-left: auto;
  border-left: 1px solid #ababab;
}

.gallery-scroll span {
  flex: 1;
  display: flex;
  align-items: center;
  justify-content: center;
  border-bottom: 1px solid #ababab;
}

.gallery-scroll span:last-child {
  border-bottom: 0;
}

.gallery-scroll .off {
  flex: 0 0 31px;
  background: #e6e6e6;
}

.editing .body {
  flex-direction: column;
}

.editing .cmd {
  height: 31px;
  margin-top: -1px;
  margin-bottom: 1px;
}

.gap-l { margin-left: 11px; }
.gap-s { margin-left: 5px; }

.collapse {
  margin: 114px 0 0 26px;
}

/* rulers and page */
.workspace {
  display: flex;
  height: 744px;
}

.view {
  width: 1895px;
  overflow: hidden;
}

.doc-row {
  display: flex;
  height: 710px;
}

.num {
  font-family: "Noto Sans", sans-serif;
  font-size: 14px;
  text-anchor: middle;
  fill: #444;
}

.tick {
  stroke: #444;
  stroke-width: 1.200;
}

.page {
  width: 1794px;
  height: 709px;
  margin-top: 1px;
  overflow: hidden;
  background: #fff;
  border: solid #cfcfcf;
  border-width: 0 1px;
}

.crop-marks {
  display: flex;
  justify-content: space-between;
  width: 1468px;
  height: 2px;
  padding-top: 1px;
  margin-left: 162px;
}

.crop-marks i {
  width: 54px;
  height: 1px;
  background: #aaa;
}

.table {
  width: 1359px;
  margin-left: 216px;
  border-left: 1px solid #000;
  font-family: "Liberation Serif", serif;
  font-size: 36.200px;
  line-height: 41.650px;
  color: #000;
}

.table svg {
  font-family: "Liberation Serif", serif;
}

.tr {
  display: grid;
  grid-template-columns: 95px 900px 363px;
  border-top: 2px solid #000;
}

.td {
  padding: 2px 0 0 16px;
  border-right: 1px solid #000;
  white-space: nowrap;
}

.head { height: 43px; }
.proof { height: 142px; }
.sketch { height: 501px; }
.next { height: 60px; }

.misspelt {
  text-decoration: underline wavy #d13438 1px;
  text-underline-offset: 2px;
  text-decoration-skip-ink: none;
}

.grammar {
  text-decoration: underline wavy #3a5fcd 1px;
  text-underline-offset: 2px;
}

.proof .td {
  padding-top: 0;
}

.formula {
  display: flex;
  height: 101px;
}

.formula span {
  width: 236px;
  padding-top: 31px;
}

.graph-cell {
  padding: 0;
}

.ink {
  font-family: "Open Sans", sans-serif;
  font-weight: 400;
  fill: #e0141e;
}

.ink .slab {
  font-family: "Noto Sans", sans-serif;
  font-weight: 300;
}

.ink path {
  fill: none;
  stroke: #e0141e;
  stroke-width: 2.300;
}

.next .td {
  padding-top: 3px;
}

.next .nest {
  padding: 0 0 0 17px;
}

.inner {
  display: grid;
  grid-template-columns: 67px 175px 396px;
  width: 638px;
  height: 60px;
  border-top: 2px solid #000;
  border-left: 1px solid #000;
}

.inner span {
  padding: 3px 0 0 18px;
  border-right: 1px solid #000;
}

/* scroll bars */
.vscroll {
  display: flex;
  flex-direction: column;
  width: 24px;
  padding-top: 2px;
  background: linear-gradient(#e4e4e4 2px, #dadada 2px);
}

.sb {
  display: flex;
  align-items: center;
  justify-content: center;
  height: 24px;
  background: #fff;
  border: 1px solid #bdbdbd;
}

.sb.thumb {
  margin: 529px 0 141px;
}

.hscroll {
  display: flex;
  height: 26px;
  padding-left: 2px;
  background: #e4e4e4;
}

.hb {
  display: flex;
  align-items: center;
  justify-content: center;
  width: 24px;
  height: 25px;
  background: #fff;
  border: 1px solid #bdbdbd;
}

.hthumb {
  width: 1816px;
  height: 25px;
  background: #fff;
  border: 1px solid #a6a6a6;
}

.hb.right {
  margin-left: 26px;
}

/* status bar */
.status {
  display: flex;
  height: 33px;
  background: #f1f1f1;
  border-top: 1px solid #c6c6c6;
  font-size: 14.800px;
  line-height: 32px;
  color: #666;
  white-space: nowrap;
}

.s-page { width: 124px; padding-left: 8px; }
.s-words { width: 102px; }
.s-lang { width: 1270px; }
.s-zoom { padding-left: 6px; }

/* taskbar */
.taskbar {
  display: flex;
  height: 60px;
  background: #0a0a0a;
  color: #fff;
}

.task.open {
  height: 60px;
  box-shadow: inset 0 -3px #76b9ed;
}

.task.current {
  margin-left: 8px;
  background: #3d3d3d;
}

.tray {
  margin-left: 621px;
}

.lang {
  width: 53px;
  padding-left: 6px;
  line-height: 61px;
  font-size: 16px;
}

.clock {
  display: flex;
  flex-direction: column;
  width: 101px;
  margin-right: 11px;
  padding-top: 3px;
  text-align: center;
  font-size: 16.500px;
  line-height: 27px;
}

.clock .date {
  font-size: 17px;
}

.desk {
  width: 1px;
  margin-left: 2px;
  background: #666;
}
```
